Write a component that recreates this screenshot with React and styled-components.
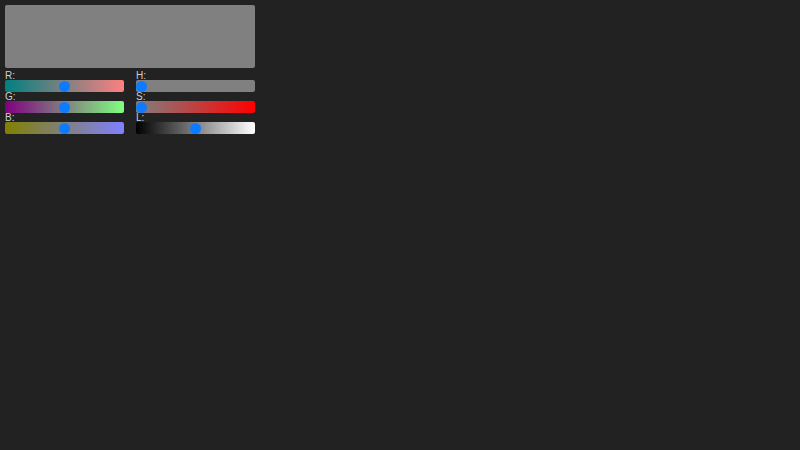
import React, { useState } from "react";
import styled, { createGlobalStyle } from "styled-components";

const Global = createGlobalStyle`
  html, body { margin: 0; padding: 0; background: #222222; }
  body { font-family: "Liberation Sans", Arial, sans-serif; }
`;

const Panel = styled.div`
  width: 250px;
  padding: 5px;
  display: flex;
  flex-direction: column;
`;

const Preview = styled.div`
  height: 63px;
  border-radius: 2px;
  background: ${(p) => p.$color};
  margin-bottom: 3px;
`;

const Columns = styled.div`
  display: grid;
  grid-template-columns: 119px 119px;
  column-gap: 12px;
`;

const Column = styled.div`
  display: flex;
  flex-direction: column;
`;

const Label = styled.label`
  font-size: 10px;
  line-height: 9px;
  height: 9px;
  color: #cfcfcf;
`;

const Range = styled.input.attrs({ type: "range" })`
  -webkit-appearance: none;
  appearance: none;
  display: block;
  width: 119px;
  height: 12px;
  margin: 0;
  padding: 0;
  border-radius: 2px;
  background: ${(p) => p.$track};
  outline: none;

  &::-webkit-slider-thumb {
    -webkit-appearance: none;
    appearance: none;
    width: 11px;
    height: 11px;
    border-radius: 50%;
    background: #0d7bff;
    border: none;
  }
`;

function Slider({ label, value, max, track, onChange }) {
  return (
    <>
      <Label>{label}</Label>
      <Range
        min={0}
        max={max}
        value={value}
        $track={track}
        onChange={(e) => onChange(Number(e.target.value))}
      />
    </>
  );
}

export default function App() {
  const [r, setR] = useState(128);
  const [g, setG] = useState(128);
  const [b, setB] = useState(128);
  const [h, setH] = useState(0);
  const [s, setS] = useState(0);
  const [l, setL] = useState(50);

  const hueTrack = `hsl(${h}, ${s}%, ${l}%)`;

  return (
    <>
      <Global />
      <Panel>
        <Preview $color={`rgb(${r}, ${g}, ${b})`} />
        <Columns>
          <Column>
            <Slider
              label="R:"
              value={r}
              max={255}
              onChange={setR}
              track={`linear-gradient(to right, rgb(0,${g},${b}), rgb(255,${g},${b}))`}
            />
            <Slider
              label="G:"
              value={g}
              max={255}
              onChange={setG}
              track={`linear-gradient(to right, rgb(${r},0,${b}), rgb(${r},255,${b}))`}
            />
            <Slider
              label="B:"
              value={b}
              max={255}
              onChange={setB}
              track={`linear-gradient(to right, rgb(${r},${g},0), rgb(${r},${g},255))`}
            />
          </Column>
          <Column>
            <Slider label="H:" value={h} max={360} onChange={setH} track={hueTrack} />
            <Slider
              label="S:"
              value={s}
              max={100}
              onChange={setS}
              track={`linear-gradient(to right, hsl(${h},0%,${l}%), hsl(${h},100%,${l}%))`}
            />
            <Slider
              label="L:"
              value={l}
              max={100}
              onChange={setL}
              track={`linear-gradient(to right, hsl(${h},${s}%,0%), hsl(${h},${s}%,50%), hsl(${h},${s}%,100%))`}
            />
          </Column>
        </Columns>
      </Panel>
    </>
  );
}
